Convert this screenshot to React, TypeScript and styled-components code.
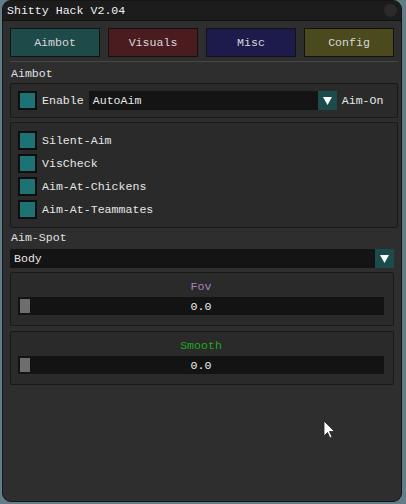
import React from "react";
import styled, { createGlobalStyle } from "styled-components";

const Global = createGlobalStyle`
  html, body { margin: 0; padding: 0; background: #627d88; }
  body { font-family: "Liberation Mono", "DejaVu Sans Mono", monospace; font-size: 11.6px; color: #e6e6e6; }
  * { box-sizing: border-box; }
`;

const Window = styled.div`
  position: relative;
  margin: 0 0 0 2px;
  width: 400px;
  height: 502px;
  background: #2e2e2e;
  border: 1px solid #151515;
  border-radius: 9px;
  overflow: hidden;
`;

const TitleBar = styled.div`
  height: 20px;
  background: #1c1c1c;
  border-bottom: 1px solid #111;
  display: flex;
  align-items: center;
  justify-content: space-between;
  padding: 0 4px;
  color: #f0f0f0;
`;

const CloseDot = styled.div`
  width: 13px;
  height: 13px;
  border-radius: 50%;
  background: #2b2b2b;
`;

const Content = styled.div`
  padding: 7px 3px 0 7px;
  display: flex;
  flex-direction: column;
`;

const TabRow = styled.div`
  display: flex;
  gap: 8px;
  padding-right: 4px;
  height: 29px;
`;

const Tab = styled.div<{ $bg: string }>`
  flex: 1;
  background: ${(p) => p.$bg};
  border: 1px solid #121212;
  display: flex;
  align-items: center;
  justify-content: center;
  color: #d8d8d8;
`;

const Separator = styled.div`
  height: 1px;
  background: #474747;
  margin-top: 4px;
`;

const Label = styled.div<{ $mt: number }>`
  margin-top: ${(p) => p.$mt}px;
  height: 14px;
  line-height: 14px;
  padding-left: 1px;
  color: #e0e0e0;
`;

const Child = styled.div<{ $mt: number; $pr?: number }>`
  margin-top: ${(p) => p.$mt}px;
  margin-right: ${(p) => p.$pr ?? 0}px;
  border: 1px solid #181818;
  background: #2a2a2a;
  border-radius: 2px;
`;

const EnableRow = styled.div`
  height: 33px;
  display: flex;
  align-items: center;
  padding-left: 7px;
  gap: 5px;
`;

const Check = styled.div`
  width: 19px;
  height: 19px;
  background: #0e0e0e;
  padding: 2px;
  flex: none;
  &::after {
    content: "";
    display: block;
    width: 100%;
    height: 100%;
    background: #1d7373;
  }
`;

const Combo = styled.div<{ $w?: number; $mt?: number; $mr?: number }>`
  height: 19px;
  background: #141414;
  display: flex;
  align-items: center;
  justify-content: space-between;
  ${(p) => (p.$w ? `width: ${p.$w}px;` : "")}
  margin-top: ${(p) => p.$mt ?? 0}px;
  margin-right: ${(p) => p.$mr ?? 0}px;
  padding-left: 4px;
  color: #e6e6e6;
  flex: none;
`;

const ComboArrow = styled.div`
  width: 19px;
  height: 19px;
  background: #1c4b4b;
  display: flex;
  align-items: center;
  justify-content: center;
`;

const CheckList = styled.div`
  display: flex;
  flex-direction: column;
  gap: 4px;
  padding: 8px 0 8px 7px;
`;

const CheckItem = styled.div`
  display: flex;
  align-items: center;
  gap: 5px;
  height: 19px;
`;

const SliderBox = styled.div`
  padding: 7px 9px 10px 7px;
  display: flex;
  flex-direction: column;
  align-items: stretch;
`;

const SliderTitle = styled.div<{ $c: string }>`
  text-align: center;
  color: ${(p) => p.$c};
  height: 14px;
  line-height: 14px;
  margin-bottom: 3px;
`;

const Slider = styled.div`
  position: relative;
  height: 18px;
  background: #131313;
  display: flex;
  align-items: center;
  justify-content: center;
  color: #f0f0f0;
`;

const Grab = styled.div`
  position: absolute;
  left: 2px;
  top: 2px;
  width: 10px;
  height: 14px;
  background: #6e6e6e;
`;

const Cursor = styled.svg`
  position: absolute;
  left: 320px;
  top: 419px;
`;

const Arrow = () => (
  <svg width="9" height="8" viewBox="0 0 9 8">
    <polygon points="0,0 9,0 4.5,8" fill="#ffffff" />
  </svg>
);

export default function App() {
  return (
    <>
      <Global />
      <Window>
        <TitleBar>
          <span>Shitty Hack V2.04</span>
          <CloseDot />
        </TitleBar>
        <Content>
          <TabRow>
            <Tab $bg="#1f4a4a">Aimbot</Tab>
            <Tab $bg="#4a1b1f">Visuals</Tab>
            <Tab $bg="#1c1b4c">Misc</Tab>
            <Tab $bg="#4a4a1e">Config</Tab>
          </TabRow>
          <Separator />
          <Label $mt={5}>Aimbot</Label>
          <Child $mt={2}>
            <EnableRow>
              <Check />
              <span>Enable</span>
              <Combo $w={248}>
                <span>AutoAim</span>
                <ComboArrow>
                  <Arrow />
                </ComboArrow>
              </Combo>
              <span>Aim-On</span>
            </EnableRow>
          </Child>
          <Child $mt={4}>
            <CheckList>
              <CheckItem>
                <Check />
                <span>Silent-Aim</span>
              </CheckItem>
              <CheckItem>
                <Check />
                <span>VisCheck</span>
              </CheckItem>
              <CheckItem>
                <Check />
                <span>Aim-At-Chickens</span>
              </CheckItem>
              <CheckItem>
                <Check />
                <span>Aim-At-Teammates</span>
              </CheckItem>
            </CheckList>
          </Child>
          <Label $mt={3}>Aim-Spot</Label>
          <Combo $mt={4} $mr={4}>
            <span>Body</span>
            <ComboArrow>
              <Arrow />
            </ComboArrow>
          </Combo>
          <Child $mt={4} $pr={4}>
            <SliderBox>
              <SliderTitle $c="#a484c4">Fov</SliderTitle>
              <Slider>
                <Grab />
                0.0
              </Slider>
            </SliderBox>
          </Child>
          <Child $mt={5} $pr={4}>
            <SliderBox>
              <SliderTitle $c="#22a822">Smooth</SliderTitle>
              <Slider>
                <Grab />
                0.0
              </Slider>
            </SliderBox>
          </Child>
        </Content>
        <Cursor width="13" height="20" viewBox="0 0 13 20">
          <path d="M1 1 L1 16 L4.5 12.5 L7 18 L9 17 L6.5 11.5 L11.5 11.5 Z" fill="#ffffff" stroke="#222" strokeWidth="0.8" />
        </Cursor>
      </Window>
    </>
  );
}
